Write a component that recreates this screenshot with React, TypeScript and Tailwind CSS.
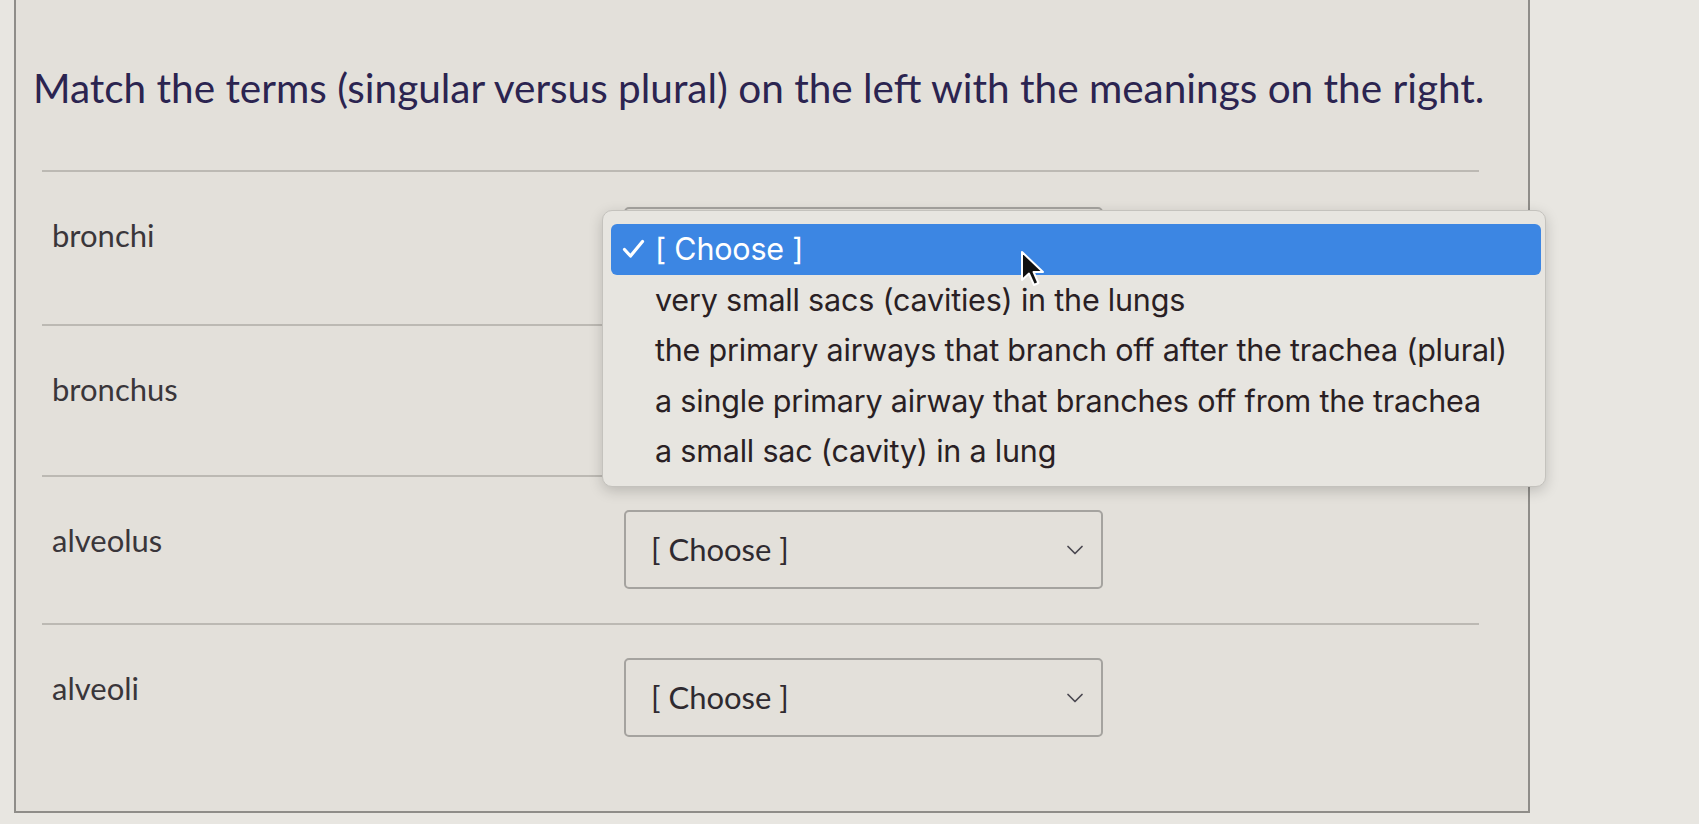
import { ChevronDown } from "lucide-react";

const terms = ["bronchi", "bronchus", "alveolus", "alveoli"];

const options = [
  "[ Choose ]",
  "very small sacs (cavities) in the lungs",
  "the primary airways that branch off after the trachea (plural)",
  "a single primary airway that branches off from the trachea",
  "a small sac (cavity) in a lung",
];

const rowHeights = ["h-[154px]", "h-[151px]", "h-[148px]", "flex-1"];

function Select({ hidden }: { hidden?: boolean }) {
  return (
    <div className="flex h-[79px] w-[479px] items-center justify-between rounded-[5px] border-2 border-[#a5a39f] bg-[#e3e0da] pl-[25px] pr-[12px]">
      <span
        className={`text-[31px] text-[#2f2a30] ${hidden ? "invisible" : ""}`}
        style={{ fontFamily: "Lato, 'Noto Sans', sans-serif" }}
      >
        [ Choose ]
      </span>
      <ChevronDown className="h-7 w-7 text-[#4a4850]" strokeWidth={1.5} />
    </div>
  );
}

function OptionsMenu() {
  return (
    <div
      className="absolute left-[-22px] top-[3px] z-10 w-[944px] rounded-[10px] border border-[#c4c2bd] bg-[#e7e5e0] pb-[9px] pl-[8px] pr-[4px] pt-[13px] shadow-[0_4px_14px_rgba(0,0,0,0.18)]"
      style={{ fontFamily: "Inter, 'Liberation Sans', sans-serif" }}
    >
      {options.map((opt, i) => (
        <div
          key={opt}
          className={`flex h-[50.5px] items-center rounded-[6px] text-[30.5px] tracking-[-0.2px] ${
            i === 0 ? "bg-[#3c86e3] text-white" : "text-[#2a1f24]"
          }`}
        >
          <span className="flex w-[44px] justify-center">
            {i === 0 ? (
              <svg width="23" height="20" viewBox="0 0 23 20">
                <path
                  d="M2.5 10.5 L8.5 17 L20.5 2.5"
                  fill="none"
                  stroke="#fff"
                  strokeWidth="3.2"
                  strokeLinecap="round"
                  strokeLinejoin="round"
                />
              </svg>
            ) : null}
          </span>
          <span>{opt}</span>
        </div>
      ))}
    </div>
  );
}

function Cursor() {
  return (
    <svg
      className="absolute left-[1020px] top-[250px] z-20"
      width="26"
      height="38"
      viewBox="0 0 13 19"
    >
      <path
        d="M1 1 L1 15 L4.5 11.8 L7 17.5 L9.2 16.5 L6.8 11 L11.5 11 Z"
        fill="#111"
        stroke="#fff"
        strokeWidth="1"
        strokeLinejoin="round"
      />
    </svg>
  );
}

export default function App() {
  return (
    <div className="relative h-[824px] w-full overflow-hidden bg-[#e8e6e1]">
      <div className="ml-[14px] flex h-[813px] w-[1516px] flex-col border-x-2 border-b-2 border-[#8f8d89] bg-[#e3e0da]">
        <h1
          className="pl-[17px] pt-[64px] text-[40.5px] leading-[48px] text-[#2b2450]"
          style={{ fontFamily: "Lato, 'Noto Sans', sans-serif" }}
        >
          Match the terms (singular versus plural) on the left with the
          meanings on the right.
        </h1>

        <div className="mt-[58px] flex flex-1 flex-col">
          {terms.map((term, i) => (
            <div
              key={term}
              className={`ml-[26px] mr-[49px] flex border-t-2 border-[#bcb9b3] ${rowHeights[i]}`}
            >
              <div
                className="w-[582px] pl-[10px] pt-[40px] text-[31px] text-[#3a363a]"
                style={{ fontFamily: "Lato, 'Noto Sans', sans-serif" }}
              >
                {term}
              </div>
              <div className={`relative ${i < 2 ? "pt-[35px]" : "pt-[33px]"}`}>
                {i === 0 ? (
                  <div className="relative">
                    <Select hidden />
                    <OptionsMenu />
                  </div>
                ) : i === 1 ? null : (
                  <Select />
                )}
              </div>
            </div>
          ))}
        </div>
      </div>
      <Cursor />
    </div>
  );
}
